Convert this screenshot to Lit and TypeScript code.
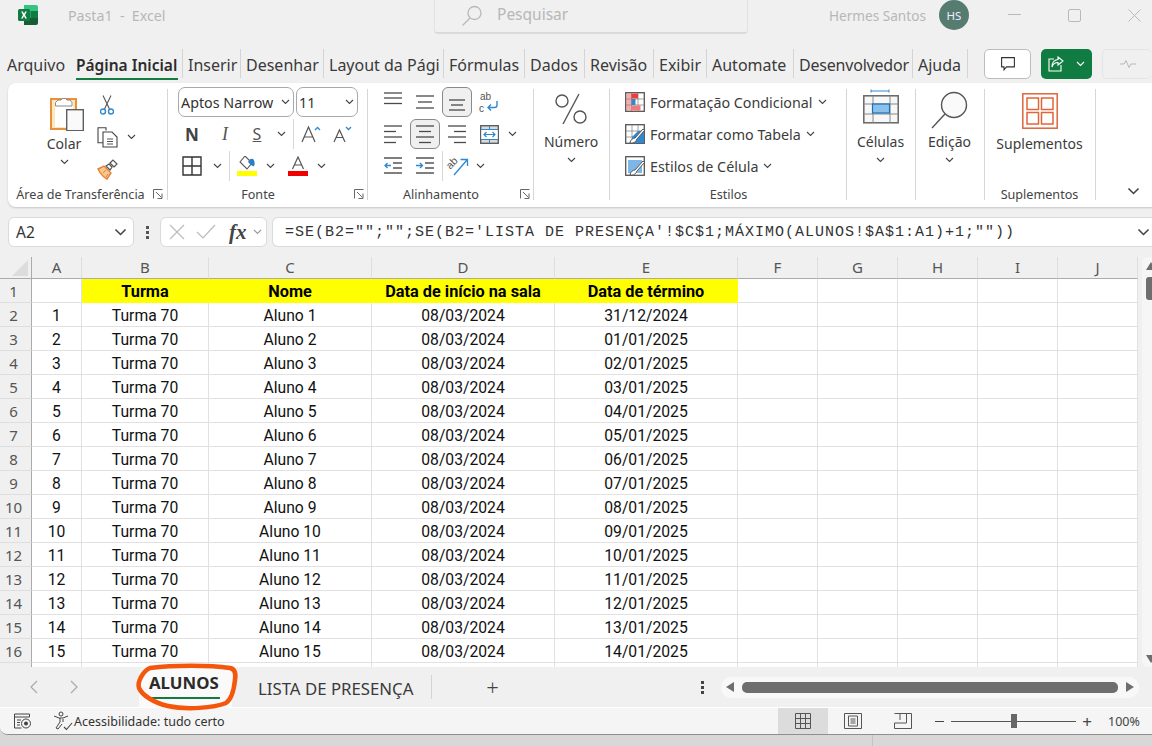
import { LitElement, html, css, svg } from 'lit';
import { customElement } from 'lit/decorators.js';

const TABS = [
  ['Arquivo', 74],
  ['Página Inicial', 102],
  ['Inserir', 59],
  ['Desenhar', 83],
  ['Layout da Pági', 120],
  ['Fórmulas', 81],
  ['Dados', 60],
  ['Revisão', 69],
  ['Exibir', 53],
  ['Automate', 87],
  ['Desenvolvedor', 119],
  ['Ajuda', 55],
] as const;

const COLS = ['A', 'B', 'C', 'D', 'E', 'F', 'G', 'H', 'I', 'J'];
const DATES = [
  '31/12/2024', '01/01/2025', '02/01/2025', '03/01/2025', '04/01/2025',
  '05/01/2025', '06/01/2025', '07/01/2025', '08/01/2025', '09/01/2025',
  '10/01/2025', '11/01/2025', '12/01/2025', '13/01/2025', '14/01/2025',
];
const FORMULA = `=SE(B2="";"";SE(B2='LISTA DE PRESENÇA'!$C$1;MÁXIMO(ALUNOS!$A$1:A1)+1;""))`;

const chev = (w = 9, c = '#444') => html`<svg class="chev" width=${w} height=${(w * 6) / 9} viewBox="0 0 9 6"><path d="M1 1l3.500 3.500L8 1" fill="none" stroke=${c} stroke-width="1.100"/></svg>`;

const alignLines = (ys: number[], xs: [number, number][]) => html`<svg width="20" height="20" viewBox="0 0 20 20">
  ${ys.map((y, i) => svg`<path d="M${xs[i][0]} ${y}H${xs[i][1]}" stroke="#4a4a4a" stroke-width="1.300"/>`)}
</svg>`;

const launcher = html`<svg class="launch" width="10" height="10" viewBox="0 0 10 10"><path d="M.5 9.500V.5h9M3 3l5.500 5.500M9 4.500v5H4.500" fill="none" stroke="#666"/></svg>`;

const icons = {
  excel: html`<svg width="20" height="20" viewBox="0 0 20 20"><path d="M6 0h12a2 2 0 0 1 2 2v4H6z" fill="#33c481"/><rect x="6" y="6" width="14" height="7" fill="#21a366"/><path d="M6 13h14v5a2 2 0 0 1-2 2H6z" fill="#185c37"/><rect x="13" y="6" width="7" height="7" fill="#107c41"/><rect y="4" width="12" height="12" rx="1.500" fill="#107c41"/><path d="M3.200 6.500h1.700L6 8.800l1.200-2.300h1.600L7 10l1.900 3.500H7.200L6 11.100l-1.200 2.400H3.100L5 10z" fill="#fff"/></svg>`,
  search: html`<svg width="22" height="22" viewBox="0 0 22 22"><circle cx="13.500" cy="8" r="6.500" fill="none" stroke="#b9b9b9" stroke-width="1.300"/><path d="M9 13l-7.500 7.500" stroke="#b9b9b9" stroke-width="1.300"/></svg>`,
  comment: html`<svg width="14" height="14" viewBox="0 0 14 14"><path d="M.6.600h12.800v9.300H5.500L3 12.800V9.900H.6z" fill="none" stroke="#333" stroke-width="1.100"/></svg>`,
  share: html`<svg width="16" height="16" viewBox="0 0 16 16"><path d="M6 3H1v12h12V9" fill="none" stroke="#fff" stroke-width="1.100"/><path d="M10 1l5 4-5 4V6.500C7 6.500 5 8 4 11c0-4 2-7 6-7.500z" fill="none" stroke="#fff" stroke-width="1.100"/></svg>`,
  pulse: html`<svg width="16" height="10" viewBox="0 0 16 10"><path d="M0 5h4l2-3.500L9 8.500l2-3.500h5" fill="none" stroke="#b9b9b9"/></svg>`,
  paste: html`<svg width="34" height="38" viewBox="0 0 34 38"><rect x="1" y="6" width="25" height="30" fill="#fde7bf" stroke="#e8903a" stroke-width="2"/><rect x="5" y="9" width="18" height="25" fill="#fff"/><path d="M5.500 13V9.500L8 7h3a3.500 3.500 0 0 1 6 0h3l2 2.500V13z" fill="#fff" stroke="#8a8a8a"/><rect x="16.700" y="16.700" width="16.600" height="21" fill="#fafafa" stroke="#5f5f5f" stroke-width="1.400"/></svg>`,
  scissors: html`<svg width="14" height="20" viewBox="0 0 14 20"><path d="M3 .500l6.500 13.500M11 .500L4.500 14" stroke="#555" fill="none" stroke-width="1.100"/><circle cx="3" cy="16.500" r="2.500" fill="none" stroke="#2f88d0" stroke-width="1.400"/><circle cx="11" cy="16.500" r="2.500" fill="none" stroke="#2f88d0" stroke-width="1.400"/></svg>`,
  copy: html`<svg width="21" height="21" viewBox="0 0 21 21"><path d="M9 3.500V.700H1v15h5" fill="none" stroke="#444" stroke-width="1.100"/><path d="M6 5h9l5 5v10H6z" fill="#fff" stroke="#444" stroke-width="1.100"/><path d="M10 12h6M10 14.500h6M10 17h6" stroke="#555"/></svg>`,
  brush: html`<svg width="21" height="21" viewBox="0 0 21 21"><path d="M1 10l6-3 7 7-4 6c-4-2-7-6-9-10z" fill="#f8c78a" stroke="#e8803a" stroke-width="1.400"/><path d="M6 14l3-3M9 18l2-3" stroke="#e8803a"/><path d="M9 7l3-2 3 3-2 3zM13 4l3-3 4 4-3 3z" fill="#fff" stroke="#555" stroke-width="1.200"/></svg>`,
  borders: html`<svg width="20" height="20" viewBox="0 0 20 20"><path d="M1 1h18v18H1zM10 1v18M1 10h18" fill="none" stroke="#333" stroke-width="1.400"/></svg>`,
  fill: html`<svg width="20" height="20" viewBox="0 0 20 20"><path d="M3 6l5-6 7 7-5 6z" fill="#fff" stroke="#555" stroke-width="1.100"/><path d="M11 6c1-3 4-4 5-3 2 2 2 6 1 7s-2-1-3-1z" fill="#2b7fc4"/><rect y="15" width="20" height="5" fill="#ffff00"/></svg>`,
  fontColor: html`<svg width="20" height="20" viewBox="0 0 20 20"><path d="M4.500 13L10 1l5.500 12M6.500 9h7" fill="none" stroke="#555" stroke-width="1.200"/><rect y="15" width="20" height="5" fill="#f00000"/></svg>`,
  grow: html`<svg width="20" height="18" viewBox="0 0 20 18"><path d="M1 17L7.500 2 14 17M3.500 12h8" fill="none" stroke="#555" stroke-width="1.200"/><path d="M14 5l2.500-2.500L19 5" fill="none" stroke="#2f88d0" stroke-width="1.300"/></svg>`,
  shrink: html`<svg width="20" height="18" viewBox="0 0 20 18"><path d="M2 17L7.500 5 13 17M4 12.500h7" fill="none" stroke="#555" stroke-width="1.200"/><path d="M14 2l2.500 2.500L19 2" fill="none" stroke="#2f88d0" stroke-width="1.300"/></svg>`,
  wrap: html`<svg class="ov" width="20" height="20" viewBox="0 0 20 20"><text x="1" y="8" font-size="10" font-family="Liberation Sans" fill="#555">ab</text><text x="0" y="19.500" font-size="10" font-family="Liberation Sans" fill="#555">c</text><path d="M18 9v4a2.500 2.500 0 0 1-2.500 2.500H9M12 12.500l-3 3 3 3" fill="none" stroke="#2f88d0" stroke-width="1.400"/></svg>`,
  merge: html`<svg width="19" height="19" viewBox="0 0 19 19"><rect x=".7" y=".7" width="17.600" height="17.600" fill="#d9d9d9" stroke="#555" stroke-width="1.300"/><rect x="1.300" y="4.500" width="16.400" height="10" fill="#fff"/><path d="M1 4.500h17M1 14.500h17M9.500 1v3M9.500 15v3" stroke="#2f88d0" stroke-width="1"/><path d="M4 9.500h11M6.500 7L4 9.500 6.500 12M12.500 7L15 9.500 12.500 12" fill="none" stroke="#2f88d0" stroke-width="1.200"/></svg>`,
  outdent: html`<svg width="20" height="20" viewBox="0 0 20 20"><path d="M1 2h18M10 7h9M10 12h9M1 17h18" stroke="#555" stroke-width="1.300"/><path d="M8 9.500H2M4.500 7L2 9.500 4.500 12" fill="none" stroke="#2f88d0" stroke-width="1.300"/></svg>`,
  indent: html`<svg width="20" height="20" viewBox="0 0 20 20"><path d="M1 2h18M10 7h9M10 12h9M1 17h18" stroke="#555" stroke-width="1.300"/><path d="M1 9.500h6M5 7l2.500 2.500L5 12" fill="none" stroke="#2f88d0" stroke-width="1.300"/></svg>`,
  orient: html`<svg class="ov" width="22" height="20" viewBox="0 0 22 20"><text x="0" y="10" font-size="10.500" font-family="Liberation Sans" fill="#555" transform="rotate(-45 6 8)">ab</text><path d="M7 19L20 4M13.500 3.500H20.500V10" fill="none" stroke="#2f88d0" stroke-width="1.300"/></svg>`,
  percent: html`<svg width="32" height="32" viewBox="0 0 32 32"><circle cx="7" cy="8" r="6" fill="none" stroke="#555" stroke-width="1.400"/><circle cx="25" cy="24" r="6" fill="none" stroke="#555" stroke-width="1.400"/><path d="M24 1L8 31" stroke="#555" stroke-width="1.400"/></svg>`,
  condFmt: html`<svg width="20" height="20" viewBox="0 0 20 20"><rect x=".7" y=".7" width="18.600" height="18.600" fill="#fff" stroke="#555" stroke-width="1.300"/><path d="M1 7h18M1 13h18M6.500 1v18M13 1v18" stroke="#888" stroke-width=".8"/><rect x="1.500" y="1.500" width="5" height="17" fill="#e96a6a" opacity=".55"/><rect x="6.500" y="1.500" width="6.500" height="5" fill="#ee3b3b"/><rect x="6.500" y="7" width="4" height="6" fill="#2f88d0"/><rect x="6.500" y="13.500" width="9" height="5" fill="#f27a7a"/></svg>`,
  tableFmt: html`<svg width="20" height="20" viewBox="0 0 20 20"><rect x=".7" y=".7" width="18.600" height="18.600" fill="#fff" stroke="#555" stroke-width="1.300"/><path d="M1 7h18M1 13h18M7 1v18M13 1v18" stroke="#888" stroke-width=".8"/><path d="M13 7h6v12H7v-6z" fill="#2f88d0"/><path d="M5 19c0-3 3-5 5-5l8-9 1.500 1.500-8 9c0 2-3 4-6.500 3.500z" fill="#fff" stroke="#555"/></svg>`,
  cellFmt: html`<svg width="20" height="20" viewBox="0 0 20 20"><rect x=".7" y=".7" width="18.600" height="18.600" fill="#fff" stroke="#555" stroke-width="1.300"/><rect x="3" y="4" width="14" height="13" fill="#7cb7e8"/><path d="M5 19c0-3 3-5 5-5l8-9 1.500 1.500-8 9c0 2-3 4-6.500 3.500z" fill="#fff" stroke="#555"/></svg>`,
  cells: html`<svg width="36" height="35" viewBox="0 0 36 35"><path d="M8 .5v3M26 .5v3M8 2h18" stroke="#2f88d0" stroke-width="1"/><rect x=".8" y="6.800" width="34.400" height="27" fill="#f7f7f7" stroke="#666" stroke-width="1.500"/><path d="M10 7v27M27 7v27M1 15h34M1 25h34" stroke="#888"/><rect x="9.500" y="15" width="17" height="9" fill="#8cc0ec" stroke="#1a6fb8" stroke-width="1.200"/></svg>`,
  zoomGlass: html`<svg width="38" height="38" viewBox="0 0 38 38"><circle cx="23" cy="14" r="12.500" fill="#fafafa" stroke="#555" stroke-width="1.400"/><path d="M14 23L1 37" stroke="#555" stroke-width="1.400"/></svg>`,
  addins: html`<svg width="36" height="36" viewBox="0 0 36 36"><rect x=".8" y=".8" width="34.400" height="34.400" fill="none" stroke="#e0653a" stroke-width="1.500"/><rect x="5" y="5" width="11.500" height="11.500" fill="none" stroke="#e0653a" stroke-width="1.500"/><rect x="19.500" y="5" width="11.500" height="11.500" fill="none" stroke="#e0653a" stroke-width="1.500"/><rect x="5" y="19.500" width="11.500" height="11.500" fill="none" stroke="#e0653a" stroke-width="1.500"/><rect x="19.500" y="19.500" width="11.500" height="11.500" fill="none" stroke="#e0653a" stroke-width="1.500"/></svg>`,
  cross: html`<svg width="16" height="16" viewBox="0 0 16 16"><path d="M1 1l14 14M15 1L1 15" stroke="#bbb" stroke-width="1.200"/></svg>`,
  check: html`<svg width="20" height="16" viewBox="0 0 20 16"><path d="M1 8l6 6L19 1" fill="none" stroke="#bbb" stroke-width="1.200"/></svg>`,
  macro: html`<svg width="18" height="16" viewBox="0 0 18 16"><path d="M.5 1h15v3H.5zM.5 4v11h7M3 7h4M3 9.500h3M3 12h3" fill="none" stroke="#444"/><circle cx="12" cy="10.500" r="4.500" fill="none" stroke="#444"/><circle cx="12" cy="10.500" r="2" fill="#444"/></svg>`,
  access: html`<svg width="20" height="20" viewBox="0 0 20 20"><circle cx="8" cy="3" r="2" fill="none" stroke="#444"/><path d="M1 5l5 2h4l5-2M7 7v4l-4 6 2 1 4-5M10 8v3" fill="none" stroke="#444"/><path d="M11 16l2.500 2.500L19 12" fill="none" stroke="#444" stroke-width="1.100"/></svg>`,
  viewGrid: html`<svg width="16" height="16" viewBox="0 0 16 16"><path d="M.5.500h15v15H.5zM5.500.500v15M10.500.500v15M.5 5.500h15M.5 10.500h15" fill="none" stroke="#555"/></svg>`,
  viewPage: html`<svg width="18" height="16" viewBox="0 0 18 16"><path d="M.5.500h17v15H.5z" fill="none" stroke="#555"/><path d="M4.500 3h9v10h-9zM6.500 6h5M6.500 8h5M6.500 10h5" fill="none" stroke="#555"/></svg>`,
  viewBreak: html`<svg width="18" height="16" viewBox="0 0 18 16"><path d="M.5.500h17v15H.5V10h12V.500M6 .500V7" fill="none" stroke="#555"/></svg>`,
};

@customElement('app-root')
export class AppRoot extends LitElement {
  static styles = css`
    :host {
      display: block;
      height: 746px;
      overflow: hidden;
      position: relative;
      background: #d8d8d8;
      font-family: 'Noto Sans', 'Open Sans', sans-serif;
      color: #333;
    }
    svg { display: block; }
    svg.ov { overflow: visible; }
    .window {
      height: 735px;
      background: #f0f0f0;
      border-bottom: 1px solid #8f8f8f;
      border-radius: 0 0 0 8px;
      overflow: hidden;
      display: flex;
      flex-direction: column;
      box-sizing: border-box;
    }

    /* title bar */
    .title {
      height: 47px;
      flex: none;
      display: flex;
      align-items: flex-start;
      color: #b7b7b7;
      font-size: 14.200px;
    }
    .logo { margin: 5px 0 0 18px; }
    .doc { margin: 6px 0 0 30px; width: 366px; white-space: pre; }
    .search {
      width: 314px;
      height: 34px;
      box-sizing: border-box;
      border: 1px solid #e2e2e2;
      border-top: none;
      border-bottom: 2px solid #dadada;
      border-radius: 0 0 4px 4px;
      display: flex;
      align-items: center;
      padding-left: 26px;
      gap: 14px;
      font-size: 15.500px;
    }
    .search span { margin-top: -4px; }
    .user { margin: 6px 0 0 81px; width: 98px; white-space: nowrap; font-size: 13.600px; }
    .avatar {
      width: 30px;
      height: 30px;
      margin-left: 12px;
      border-radius: 50%;
      background: #567c71;
      color: #eef;
      font-size: 11.500px;
      display: flex;
      align-items: center;
      justify-content: center;
    }
    .win-btns {
      display: grid;
      grid-template-columns: 13px 13px 13px;
      column-gap: 47px;
      margin: 9px 0 0 39px;
      height: 13px;
    }
    .win-min { border-top: 1px solid #b9b9b9; margin-top: 5px; }
    .win-max { border: 1px solid #b9b9b9; border-radius: 2px; box-sizing: border-box; }

    /* tabs */
    .tabs {
      height: 33px;
      flex: none;
      display: flex;
      font-size: 16px;
      padding: 2px 0 0 2px;
      box-sizing: border-box;
    }
    .tab {
      box-sizing: border-box;
      height: 29px;
      padding: 0 4px 0 5px;
      line-height: 33px;
      color: #3a3a3a;
      border-right: 1px solid #d4d4d4;
      flex: none;
    }
    .tab span { display: block; white-space: nowrap; height: 33px; }
    .tab.tight { letter-spacing: -0.2px; }
    .tab:first-child { border-right: none; }
    .tab.on {
      font-weight: 600;
      font-size: 15.500px;
      color: #2b2b2b;
      height: 31px;
      border: none;
      padding: 0;
      margin-right: 4px;
      position: relative;
    }
    .tab.on::after { content: ''; position: absolute; left: 0; right: 0; bottom: 0; height: 2px; background: #107c41; }
    .tab.on + .tab { border-left: 1px solid #d4d4d4; }
    .actions { display: flex; margin-left: 16px; gap: 10px; }
    .btn {
      box-sizing: border-box;
      height: 30px;
      border-radius: 5px;
      display: flex;
      align-items: center;
      justify-content: center;
      flex: none;
    }
    .btn.cm { width: 47px; background: #fff; border: 1px solid #bdbdbd; }
    .btn.sh { width: 51px; background: #107c41; gap: 12px; }
    .btn.mo { width: 50px; border: 1px solid #e4e4e4; border-right: none; }

    /* ribbon */
    .ribbon {
      height: 124px;
      flex: none;
      box-sizing: border-box;
      margin: 3px 0 0 8px;
      padding-top: 4px;
      background: #fff;
      border-radius: 8px 0 0 8px;
      box-shadow: 0 1px 2px rgba(0, 0, 0, 0.18);
      display: flex;
      font-size: 14px;
      color: #3c3c3c;
    }
    .group {
      position: relative;
      flex: none;
      height: 116px;
      display: flex;
      flex-direction: column;
      box-sizing: border-box;
    }
    .group::after {
      content: '';
      position: absolute;
      right: 0;
      top: 2px;
      bottom: 3px;
      width: 1px;
      background: #d6d6d6;
    }
    .g-body { flex: 1; min-height: 0; }
    .g-foot {
      height: 18px;
      flex: none;
      display: flex;
      align-items: center;
      font-size: 12.600px;
      white-space: nowrap;
      color: #444;
    }
    .g-foot span { flex: 1; text-align: center; }
    .launch { margin: 0 4px 0 6px; flex: none; }
    .big {
      display: flex;
      flex-direction: column;
      align-items: center;
    }
    .big .lbl { font-size: 14px; line-height: 20px; }

    .g-clip { width: 160px; }
    .g-clip .g-foot { padding-left: 3px; }
    .g-clip .launch { margin-left: 3px; margin-right: 5px; }
    .clip { display: flex; padding-left: 37px; }
    .clip .big { width: 38px; padding-top: 6px; }
    .clip .big svg:first-child { margin-left: 6px; }
    .clip .big .lbl { margin-top: 3px; }
    .clip .big .chev { margin-top: 5px; }
    .clip-side {
      margin-left: 14px;
      display: grid;
      grid-template-rows: 32px 32px 32px;
      padding-top: 3px;
    }
    .clip-side > div { display: flex; align-items: center; gap: 9px; height: 30px; }
    .clip-side > div:first-child { padding-left: 3px; }

    .g-font { width: 200px; padding-left: 10px; }
    .g-font .g-foot { margin-left: -10px; }
    .sel-row { display: flex; gap: 2px; }
    .sel {
      box-sizing: border-box;
      height: 30px;
      border: 1px solid #a9a9a9;
      border-radius: 7px;
      display: flex;
      align-items: center;
      justify-content: space-between;
      padding: 0 3px 0 2px;
      font-size: 14.300px;
      color: #333;
    }
    .sel.f { width: 116px; }
    .sel.s { width: 62px; }
    .f2, .f3 { display: grid; justify-items: center; align-items: center; height: 30px; margin-top: 2px; }
    .f2 { grid-template-columns: 28px 38px 26px 22px 2px 34px 28px; }
    .f3 { grid-template-columns: 28px 22px 2px 34px 12px 32px 26px; }
    .vsep { width: 1px; height: 100%; background: #d6d6d6; }
    .bold { font-weight: 700; font-size: 17px; color: #444; }
    .ital { font-family: 'Liberation Serif', serif; font-style: italic; font-size: 18px; color: #555; }
    .und { text-decoration: underline; font-size: 16px; color: #555; }
    .f3 .end { justify-self: end; }

    .g-align { width: 166px; padding-left: 10px; }
    .g-align .g-foot { margin-left: -10px; }
    .al { display: grid; grid-template-columns: repeat(4, 32px) 30px; grid-auto-rows: 32px; }
    .al > div { display: flex; align-items: center; justify-content: center; box-sizing: border-box; width: 30px; height: 30px; }
    .al .on { background: #f0f0f0; border: 1px solid #8a8a8a; border-radius: 6px; }
    .al .l { justify-content: flex-start; padding-left: 2px; }
    .al .sp { border-left: 1px solid #d6d6d6; }

    .g-num, .g-cells, .g-edit, .g-add { padding-right: 2px; }
    .g-num { width: 76px; }
    .g-num .big { padding-top: 6px; }
    .big .lbl.m { margin-top: 7px; }
    .g-num .chev, .g-cells .chev, .g-edit .chev { margin-top: 5px; }

    .g-sty { width: 237px; padding-left: 15px; }
    .g-sty .g-foot { margin-left: -15px; padding-top: 1px; }
    .sty-list { margin-top: -1px; }
    .sty-row { display: flex; align-items: center; gap: 5px; height: 32px; font-size: 14.300px; white-space: nowrap; }

    .g-cells, .g-edit { width: 69px; }
    .g-cells .big { padding-top: 2px; }
    .g-cells .big .lbl.m { margin-top: 8px; }
    .g-edit .big { padding-top: 4px; }
    .g-edit .big .lbl { margin-top: 3px; }
    .g-add { width: 111px; }
    .g-add .big { padding-top: 6px; }
    .g-add .lbl { margin-top: 5px; }
    .g-add .g-foot { padding-top: 1px; }
    .collapse { margin: 100px 0 0 31px; }

    /* formula bar */
    .fbar {
      height: 30px;
      flex: none;
      margin: 10px 0;
      padding-left: 8px;
      display: flex;
      align-items: stretch;
    }
    .fbox {
      box-sizing: border-box;
      background: #fff;
      border: 1px solid #dadada;
      border-radius: 6px;
      display: flex;
      align-items: center;
    }
    .name { width: 126px; padding: 0 6px 0 7px; justify-content: space-between; font-size: 15.500px; }
    .dots { width: 26px; display: flex; flex-direction: column; align-items: center; justify-content: center; gap: 2px; }
    .dots i { width: 3px; height: 3px; background: #555; }
    .fx { width: 107px; padding-left: 8px; gap: 11px; }
    .fx em { font-family: 'Liberation Serif', serif; font-size: 21px; font-weight: 700; color: #444; margin-left: 2px; margin-right: -5px; }
    .formula {
      flex: 1;
      margin-left: 5px;
      border-right: none;
      border-radius: 6px 0 0 6px;
      padding: 1px 2px 0 12px;
      justify-content: space-between;
      font-family: 'Liberation Mono', monospace;
      font-size: 15px;
      letter-spacing: 1px;
      white-space: nowrap;
      color: #333;
    }

    /* sheet */
    .sheet-wrap { display: flex; flex: none; height: 410px; }
    .sheet {
      width: 1138px;
      flex: none;
      height: 410px;
      overflow: hidden;
      display: grid;
      grid-template-columns: 32px 50px 127px 163px 183px 183px 80px 80px 80px 80px 80px;
      grid-template-rows: 22px repeat(17, 24px);
      font-family: Roboto, 'Liberation Sans', sans-serif;
      font-size: 15.700px;
      color: #111;
    }
    .corner { position: relative; border-bottom: 1px solid #ababab; border-right: 1px solid #ababab; box-sizing: border-box; }
    .corner svg { position: absolute; left: 12px; top: 3px; }
    .ch, .rh {
      display: flex;
      align-items: center;
      justify-content: center;
      box-sizing: border-box;
      color: #555;
      font-family: 'Noto Sans', sans-serif;
      font-size: 15px;
    }
    .ch { border-bottom: 1px solid #ababab; border-right: 1px solid #dedede; padding-bottom: 2px; }
    .rh { border-right: 1px solid #ababab; border-bottom: 1px solid #dedede; padding-right: 4px; }
    .c {
      background: #fff;
      box-sizing: border-box;
      border-right: 1px solid #e1e1e1;
      border-bottom: 1px solid #e1e1e1;
      display: flex;
      align-items: center;
      justify-content: center;
      white-space: nowrap;
      padding-top: 2px;
    }
    .c.h { background: #ffff00; font-weight: 700; border-color: #ffff00; font-size: 16.300px; color: #000; }
    .vscroll {
      flex: 1;
      margin-left: 4px;
      height: 410px;
      background: #f6f6f6;
      border-radius: 6px 0 0 6px;
      display: flex;
      flex-direction: column;
      align-items: flex-end;
      box-sizing: border-box;
      padding-top: 5px;
    }
    .vup { width: 0; height: 0; border: 5px solid transparent; border-top: none; border-bottom: 8px solid #6e6e6e; margin-right: -4px; }
    .vthumb { width: 6px; height: 23px; background: #6e6e6e; border-radius: 3px 0 0 3px; margin-top: 7px; }
    .vdown { width: 0; height: 0; border: 5px solid transparent; border-bottom: none; border-top: 8px solid #6e6e6e; margin: 355px -4px 0 0; }

    /* sheet tabs */
    .sheets { height: 40px; flex: none; display: flex; align-items: center; position: relative; }
    .nav { width: 41px; display: flex; justify-content: center; }
    .navs { display: flex; margin-left: 13px; width: 131px; }
    .stab { font-size: 16.800px; white-space: nowrap; color: #3a3a3a; }
    .stab.on {
      box-sizing: border-box;
      width: 93px;
      height: 40px;
      margin-left: -5px;
      padding: 4px 0 0 10px;
      background: #fafafa;
      border-radius: 6px 6px 0 0;
      font-weight: 700;
      color: #2b2b2b;
      position: relative;
    }
    .stab.on::after { content: ''; position: absolute; left: 10px; width: 71px; height: 2px; bottom: 8px; background: #107c41; }
    .stab.off { margin-left: 26px; margin-top: 2px; }
    .ssep { width: 1px; height: 24px; background: #d4d4d4; margin-left: 18px; }
    .plus { margin-left: 52px; font-size: 22px; line-height: 1; color: #444; width: 16px; text-align: center; font-weight: 300; }
    .sdots { margin-left: 201px; display: flex; flex-direction: column; gap: 2px; }
    .sdots i { width: 3px; height: 3px; background: #444; }
    .hscroll {
      margin-left: 17px;
      width: 418px;
      height: 21px;
      border-radius: 10px;
      background: #f8f8f8;
      display: flex;
      align-items: center;
      justify-content: space-between;
      padding: 0 5px;
      box-sizing: border-box;
    }
    .hthumb { width: 376px; height: 11px; background: #6e6e6e; border-radius: 5px; }
    .hl { width: 0; height: 0; border: 5px solid transparent; border-left: none; border-right: 8px solid #6e6e6e; }
    .hr { width: 0; height: 0; border: 5px solid transparent; border-right: none; border-left: 8px solid #6e6e6e; }

    /* status bar */
    .status {
      flex: 1;
      background: #f5f5f5;
      border-top: 1px solid #fff;
      display: flex;
      align-items: stretch;
      font-size: 12.500px;
      color: #333;
    }
    .st { display: flex; align-items: center; }
    .st.macro { margin-left: 14px; width: 39px; }
    .st.acc { width: 21px; }
    .st.msg { width: 704px; }
    .view { display: flex; width: 50px; align-items: center; justify-content: center; }
    .view.on { background: #dcdcdc; }
    .zoomer { display: flex; align-items: center; margin-left: 7px; color: #444; }
    .zoomer .minus { width: 9px; height: 1px; background: #444; }
    .track { width: 125px; height: 1px; background: #555; margin-left: 7px; position: relative; }
    .track::after { content: ''; position: absolute; left: 60px; top: -7px; width: 6px; height: 14px; background: #666; }
    .zoomer .pl { margin-left: 5px; font-size: 17px; line-height: 1; width: 12px; text-align: center; }
    .pct { margin-left: 15px; font-size: 12.500px; }

    .mark { position: absolute; left: 134px; top: 662px; pointer-events: none; }
    .shade { position: absolute; left: 872px; top: 735px; width: 1px; height: 11px; background: #c4c4c4; }
  `;

  private cell(t: string, cls = '') {
    return html`<div class="c ${cls}">${t}</div>`;
  }

  private renderRows() {
    const blanks = (n: number) => Array.from({ length: n }, () => html`<div class="c"></div>`);
    return html`
      <div class="rh">1</div>
      <div class="c"></div>
      ${this.cell('Turma', 'h')}${this.cell('Nome', 'h')}
      ${this.cell('Data de início na sala', 'h')}${this.cell('Data de término', 'h')}
      ${blanks(5)}
      ${DATES.map(
        (d, i) => html`
          <div class="rh">${i + 2}</div>
          ${this.cell(String(i + 1))}
          ${this.cell('Turma 70')}
          ${this.cell(`Aluno ${i + 1}`)}
          ${this.cell('08/03/2024')}
          ${this.cell(d)}
          ${blanks(5)}
        `
      )}
      <div class="rh"></div>
      ${blanks(10)}
    `;
  }

  private renderRibbon() {
    return html`
      <div class="ribbon">
        <div class="group g-clip">
          <div class="g-body clip">
            <div class="big">
              ${icons.paste}
              <div class="lbl">Colar</div>
              ${chev()}
            </div>
            <div class="clip-side">
              <div>${icons.scissors}</div>
              <div>${icons.copy}${chev()}</div>
              <div>${icons.brush}</div>
            </div>
          </div>
          <div class="g-foot"><span>Área de Transferência</span>${launcher}</div>
        </div>

        <div class="group g-font">
          <div class="g-body">
            <div class="sel-row">
              <div class="sel f"><span>Aptos Narrow</span>${chev()}</div>
              <div class="sel s"><span>11</span>${chev()}</div>
            </div>
            <div class="f2">
              <span class="bold">N</span>
              <span class="ital">I</span>
              <span class="und">S</span>
              ${chev()}
              <div class="vsep"></div>
              ${icons.grow}${icons.shrink}
            </div>
            <div class="f3">
              ${icons.borders}${chev()}
              <div class="vsep"></div>
              ${icons.fill}${chev()}
              <div class="end">${icons.fontColor}</div>
              ${chev()}
            </div>
          </div>
          <div class="g-foot"><span>Fonte</span>${launcher}</div>
        </div>

        <div class="group g-align">
          <div class="g-body al">
            <div>${alignLines([1, 6, 11.5], [[1, 19], [1, 19], [1, 19]])}</div>
            <div>${alignLines([4, 10, 16], [[1, 19], [3, 17], [1, 19]])}</div>
            <div class="on">${alignLines([8, 13, 18], [[2, 18], [4, 16], [2, 18]])}</div>
            <div>${icons.wrap}</div>
            <div></div>
            <div>${alignLines([2, 7.5, 13, 18.5], [[1, 19], [1, 13], [1, 19], [1, 13]])}</div>
            <div class="on">${alignLines([2, 7.5, 13, 18.5], [[1, 19], [4, 16], [1, 19], [4, 16]])}</div>
            <div>${alignLines([2, 7.5, 13, 18.5], [[1, 19], [7, 19], [1, 19], [7, 19]])}</div>
            <div>${icons.merge}</div>
            <div class="l">${chev()}</div>
            <div>${icons.outdent}</div>
            <div>${icons.indent}</div>
            <div class="sp">${icons.orient}</div>
            <div class="l">${chev()}</div>
          </div>
          <div class="g-foot"><span>Alinhamento</span>${launcher}</div>
        </div>

        <div class="group g-num">
          <div class="g-body big">
            ${icons.percent}
            <div class="lbl m">Número</div>
            ${chev()}
          </div>
        </div>

        <div class="group g-sty">
          <div class="g-body sty-list">
            <div class="sty-row">${icons.condFmt}<span>Formatação Condicional</span>${chev()}</div>
            <div class="sty-row">${icons.tableFmt}<span>Formatar como Tabela</span>${chev()}</div>
            <div class="sty-row">${icons.cellFmt}<span>Estilos de Célula</span>${chev()}</div>
          </div>
          <div class="g-foot"><span>Estilos</span></div>
        </div>

        <div class="group g-cells">
          <div class="g-body big">
            ${icons.cells}
            <div class="lbl m">Células</div>
            ${chev()}
          </div>
        </div>

        <div class="group g-edit">
          <div class="g-body big">
            ${icons.zoomGlass}
            <div class="lbl">Edição</div>
            ${chev()}
          </div>
        </div>

        <div class="group g-add">
          <div class="g-body big">
            ${icons.addins}
            <div class="lbl">Suplementos</div>
          </div>
          <div class="g-foot"><span>Suplementos</span></div>
        </div>

        <div class="collapse">${chev(13)}</div>
      </div>
    `;
  }

  render() {
    return html`
      <div class="window">
        <div class="title">
          <div class="logo">${icons.excel}</div>
          <div class="doc">Pasta1  -  Excel</div>
          <div class="search">${icons.search}<span>Pesquisar</span></div>
          <div class="user">Hermes Santos</div>
          <div class="avatar">HS</div>
          <div class="win-btns">
            <div class="win-min"></div>
            <div class="win-max"></div>
            <svg width="13" height="13" viewBox="0 0 13 13"><path d="M.5.500l12 12M12.500.500l-12 12" stroke="#b9b9b9"/></svg>
          </div>
        </div>

        <div class="tabs">
          ${TABS.map(
            ([t, w]) => html`<div class="tab ${t === 'Página Inicial' ? 'on' : ''} ${t === 'Desenvolvedor' ? 'tight' : ''}" style="width:${w}px"><span>${t}</span></div>`
          )}
          <div class="actions">
            <div class="btn cm">${icons.comment}</div>
            <div class="btn sh">${icons.share}${chev(9, '#fff')}</div>
            <div class="btn mo">${icons.pulse}</div>
          </div>
        </div>

        ${this.renderRibbon()}

        <div class="fbar">
          <div class="fbox name"><span>A2</span>${chev(13)}</div>
          <div class="dots"><i></i><i></i><i></i></div>
          <div class="fbox fx">${icons.cross}${icons.check}<em>fx</em>${chev(9, '#999')}</div>
          <div class="fbox formula"><span>${FORMULA}</span>${chev(13)}</div>
        </div>

        <div class="sheet-wrap">
          <div class="sheet">
            <div class="corner"><svg width="16" height="16" viewBox="0 0 16 16"><path d="M16 0v16H0z" fill="#dcdcdc"/></svg></div>
            ${COLS.map((c) => html`<div class="ch">${c}</div>`)}
            ${this.renderRows()}
          </div>
          <div class="vscroll">
            <div class="vup"></div>
            <div class="vthumb"></div>
            <div class="vdown"></div>
          </div>
        </div>

        <div class="sheets">
          <div class="navs">
            <div class="nav"><svg width="9" height="14" viewBox="0 0 9 14"><path d="M8 1L2 7l6 6" fill="none" stroke="#aaa" stroke-width="1.200"/></svg></div>
            <div class="nav"><svg width="9" height="14" viewBox="0 0 9 14"><path d="M1 1l6 6-6 6" fill="none" stroke="#aaa" stroke-width="1.200"/></svg></div>
          </div>
          <div class="stab on">ALUNOS</div>
          <div class="stab off">LISTA DE PRESENÇA</div>
          <div class="ssep"></div>
          <div class="plus">+</div>
          <div class="sdots"><i></i><i></i><i></i></div>
          <div class="hscroll"><div class="hl"></div><div class="hthumb"></div><div class="hr"></div></div>
        </div>

        <div class="status">
          <div class="st macro">${icons.macro}</div>
          <div class="st acc">${icons.access}</div>
          <div class="st msg">Acessibilidade: tudo certo</div>
          <div class="view on">${icons.viewGrid}</div>
          <div class="view">${icons.viewPage}</div>
          <div class="view">${icons.viewBreak}</div>
          <div class="zoomer">
            <div class="minus"></div>
            <div class="track"></div>
            <div class="pl">+</div>
            <div class="pct">100%</div>
          </div>
        </div>
      </div>

      <svg class="mark" width="108" height="52" viewBox="0 0 108 52">
        <path d="M16 6C40 3 75 3 96 6c5 1 6 6 5 12-1 9-3 19-9 23-12 5-40 7-58 3C20 41 8 33 5 26 3 20 9 9 16 6z" fill="none" stroke="#f4570b" stroke-width="4.500"/>
      </svg>
      <div class="shade"></div>
    `;
  }
}
